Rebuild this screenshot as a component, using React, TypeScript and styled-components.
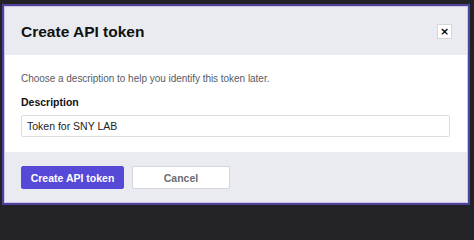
import React from "react";
import styled, { createGlobalStyle } from "styled-components";

const Global = createGlobalStyle`
  html, body { margin: 0; padding: 0; background: #232327; }
  body { font-family: "Liberation Sans", Arial, Helvetica, sans-serif; }
  * { box-sizing: border-box; }
`;

const Page = styled.div`
  width: 474px;
  height: 209px;
  padding: 4px 4px 4px 2px;
  background: #232327;
`;

const Modal = styled.div`
  width: 468px;
  height: 201px;
  border: 2px solid #4d419c;
  box-shadow: inset 0 0 0 1px #c9c6e6;
  padding: 1px;
  display: flex;
  flex-direction: column;
  background: #e9ebf0;
`;

const Header = styled.div`
  height: 48px;
  display: flex;
  align-items: center;
  justify-content: space-between;
  padding: 2px 15px 0 16px;
  background: #e9ebf0;
`;

const Title = styled.h2`
  margin: 0;
  font-size: 15.5px;
  font-weight: 700;
  color: #111;
`;

const CloseButton = styled.button`
  width: 15px;
  height: 15px;
  padding: 0;
  margin-top: -2px;
  border: 1px solid #d4d6dc;
  background: #fff;
  display: flex;
  align-items: center;
  justify-content: center;
  font-family: "DejaVu Sans", sans-serif;
  font-size: 11px;
  font-weight: 700;
  line-height: 1;
  color: #000;
`;

const Body = styled.div`
  height: 97px;
  background: #fff;
  padding: 17px 16px 0 16px;
  display: flex;
  flex-direction: column;
`;

const Hint = styled.p`
  margin: 0;
  font-size: 10px;
  line-height: 14px;
  letter-spacing: -0.03px;
  color: #585b62;
`;

const Label = styled.label`
  margin-top: 9px;
  font-size: 10.5px;
  line-height: 14px;
  font-weight: 700;
  color: #111;
`;

const Input = styled.input`
  margin-top: 6px;
  width: 429px;
  height: 22px;
  border: 1px solid #dcdee3;
  border-radius: 2px;
  padding: 0 5px;
  font-family: "Liberation Sans", Arial, sans-serif;
  font-size: 10.5px;
  color: #222;
  background: #fff;
  outline: none;
`;

const Footer = styled.div`
  flex: 1;
  background: #e9ebf0;
  display: flex;
  align-items: flex-start;
  gap: 8px;
  padding: 14px 16px 0 16px;
`;

const Button = styled.button<{ $primary?: boolean }>`
  height: 23px;
  width: ${(p) => (p.$primary ? "103px" : "98px")};
  border-radius: 2px;
  font-family: "Liberation Sans", Arial, sans-serif;
  font-size: 10.5px;
  font-weight: 700;
  padding: 0;
  border: 1px solid ${(p) => (p.$primary ? "#5649d8" : "#d4d6dc")};
  background: ${(p) => (p.$primary ? "#5649d8" : "#fff")};
  color: ${(p) => (p.$primary ? "#fff" : "#6a6d73")};
`;

export default function App() {
  return (
    <Page>
      <Global />
      <Modal>
        <Header>
          <Title>Create API token</Title>
          <CloseButton aria-label="Close">×</CloseButton>
        </Header>
        <Body>
          <Hint>Choose a description to help you identify this token later.</Hint>
          <Label>Description</Label>
          <Input defaultValue="Token for SNY LAB" />
        </Body>
        <Footer>
          <Button $primary>Create API token</Button>
          <Button>Cancel</Button>
        </Footer>
      </Modal>
    </Page>
  );
}
